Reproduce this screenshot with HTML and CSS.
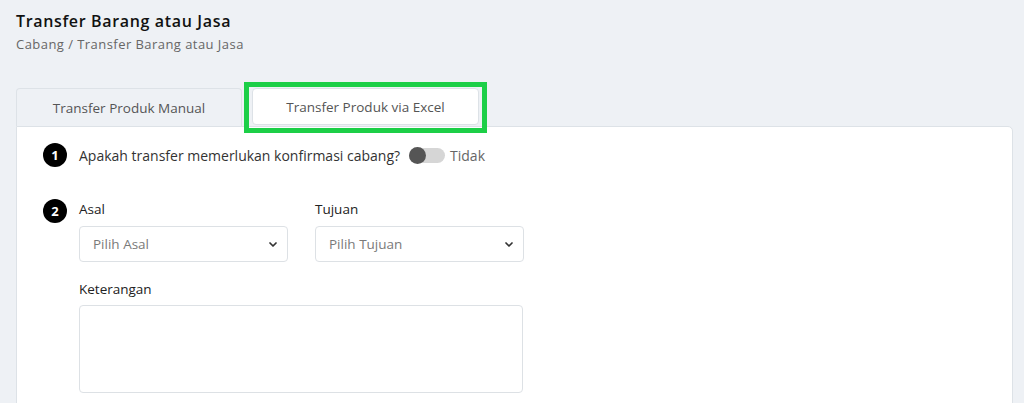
FILE: index.html
```html
<!DOCTYPE html>
<html lang="id">
<head>
<meta charset="utf-8">
<title>Transfer Barang atau Jasa</title>
<link rel="stylesheet" href="styles.css">
</head>
<body>
<div class="page">
  <header class="page-head">
    <h1 class="title">Transfer Barang atau Jasa</h1>
    <div class="crumb">Cabang / Transfer Barang atau Jasa</div>
  </header>

  <nav class="tabs">
    <div class="tab">Transfer Produk Manual</div>
    <div class="tab active">Transfer Produk via Excel</div>
  </nav>

  <section class="card">
    <div class="step step-one">
      <span class="num">1</span>
      <span class="question">Apakah transfer memerlukan konfirmasi cabang?</span>
      <span class="toggle"><span class="knob"></span></span>
      <span class="toggle-label">Tidak</span>
    </div>

    <div class="step step-two">
      <span class="num">2</span>
      <div class="fields">
        <div class="field-row">
          <div class="field">
            <label class="label">Asal</label>
            <div class="select"><span>Pilih Asal</span>
              <svg class="chev" viewBox="0 0 8 5" width="8" height="5"><path d="M1 1l3 3 3-3" fill="none" stroke="#333" stroke-width="1.7" stroke-linecap="round" stroke-linejoin="round"/></svg>
            </div>
          </div>
          <div class="field">
            <label class="label">Tujuan</label>
            <div class="select"><span>Pilih Tujuan</span>
              <svg class="chev" viewBox="0 0 8 5" width="8" height="5"><path d="M1 1l3 3 3-3" fill="none" stroke="#333" stroke-width="1.7" stroke-linecap="round" stroke-linejoin="round"/></svg>
            </div>
          </div>
        </div>
        <div class="field wide">
          <label class="label">Keterangan</label>
          <div class="textarea"></div>
        </div>
      </div>
    </div>
  </section>
</div>
</body>
</html>
```

FILE: styles.css
```css
* { box-sizing: border-box; }
html, body { margin: 0; padding: 0; }
body {
  background: #eef1f5;
  font-family: "Open Sans", "Noto Sans", sans-serif;
  color: #222;
  height: 403px;
  overflow: hidden;
}
.page { padding: 10px 11px 0 16px; }
.page-head { height: 78px; }
.title {
  margin: 0;
  font-size: 16px;
  font-weight: 600;
  line-height: 22px;
  color: #111;
  letter-spacing: 0.65px;
}
.crumb {
  margin-top: 3px;
  font-size: 13px;
  line-height: 18px;
  color: #666;
  letter-spacing: 0.45px;
}
.tabs {
  display: flex;
  gap: 10px;
  height: 38px;
}
.tab {
  width: 226px;
  height: 38px;
  display: flex;
  align-items: center;
  justify-content: center;
  font-size: 13.5px;
  color: #555;
  background: #eef1f5;
  border: 1px solid #dde2e7;
  border-bottom: none;
  border-radius: 4px 4px 0 0;
}
.tab.active {
  position: relative;
  width: 227px;
  height: 37px;
  background: #fff;
  border-bottom: 1px solid #dde2e7;
  border-radius: 4px;
}
.tab.active::after {
  content: "";
  position: absolute;
  left: -9px; right: -9px; top: -7px; bottom: -9px;
  border: 5px solid #1ccf47;
}
.card {
  background: #fff;
  border: 1px solid #dde2e7;
  border-radius: 0 5px 0 0;
  height: 290px;
  padding: 16px 26px;
}
.step { display: flex; }
.step-one { align-items: center; height: 24px; }
.num {
  width: 24px; height: 24px;
  flex: none;
  border-radius: 50%;
  background: #000;
  color: #fff;
  font-size: 13px;
  font-weight: 700;
  display: flex;
  align-items: center;
  justify-content: center;
}
.question {
  margin-left: 12px;
  font-size: 14px;
  color: #333;
}
.toggle {
  margin-left: 9px;
  width: 36px; height: 15px;
  border-radius: 8px;
  background: #d6d6d6;
  position: relative;
  display: inline-block;
}
.knob {
  position: absolute;
  left: 0; top: -1px;
  width: 17px; height: 17px;
  border-radius: 50%;
  background: #555;
}
.toggle-label {
  margin-left: 5px;
  font-size: 14px;
  color: #666;
}
.step-two { margin-top: 32px; align-items: flex-start; }
.fields { margin-left: 12px; }
.field-row { display: flex; gap: 27px; }
.field { display: flex; flex-direction: column; width: 209px; }
.field.wide { width: 444px; margin-top: 17px; }
.field.wide .label { margin-bottom: 7px; }
.label {
  font-size: 13.5px;
  line-height: 18px;
  color: #222;
  margin-bottom: 8px;
  margin-top: 1px;
}
.select {
  height: 36px;
  border: 1px solid #dde1e5;
  border-radius: 4px;
  display: flex;
  align-items: center;
  justify-content: space-between;
  padding: 0 10px 0 13px;
  font-size: 13.5px;
  color: #7a7a7a;
}
.chev { display: block; }
.textarea {
  height: 88px;
  border: 1px solid #dde1e5;
  border-radius: 4px;
}
```
